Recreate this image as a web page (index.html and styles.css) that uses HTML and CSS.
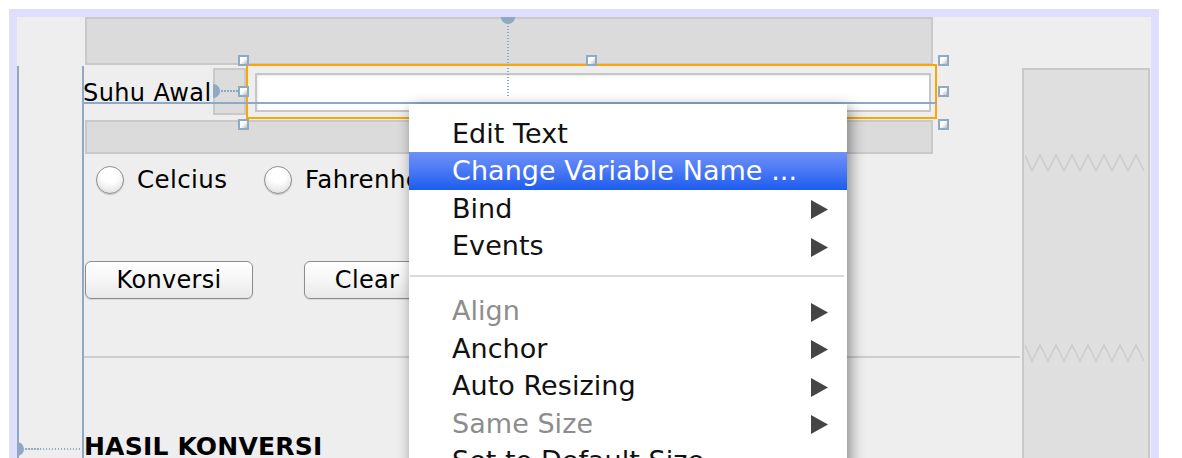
FILE: index.html
```html
<!DOCTYPE html>
<html lang="id">
<head>
<meta charset="utf-8">
<title>Form Designer</title>
<link rel="stylesheet" href="styles.css">
</head>
<body>
<div class="designer">
  <div class="canvas">
    <div class="gutter"></div>
    <div class="form">
      <div class="gap-box top-gap"></div>
      <div class="field-row">
        <div class="field-label">Suhu Awal</div>
        <div class="gap-box small-gap"></div>
        <div class="field-sel">
          <div class="textfield"></div>
          <span class="handle h-l h-t"></span>
          <span class="handle h-c h-t"></span>
          <span class="handle h-r h-t"></span>
          <span class="handle h-l h-m"></span>
          <span class="handle h-r h-m"></span>
          <span class="handle h-l h-b"></span>
          <span class="handle h-r h-b"></span>
        </div>
      </div>
      <div class="gap-box mid-gap"></div>
      <div class="radios">
        <div class="radio radio-first"><span class="radio-dot"></span><span>Celcius</span></div>
        <div class="radio"><span class="radio-dot"></span><span>Fahrenheit</span></div>
      </div>
      <div class="buttons">
        <div class="btn btn-konversi">Konversi</div>
        <div class="btn btn-clear">Clear</div>
      </div>
      <div class="divider"></div>
      <div class="heading">HASIL KONVERSI</div>
    </div>
    <div class="side-panel">
      <svg class="zigzag zig-1" width="124" height="20" viewBox="0 0 124 20"><polyline points="0,2 7,18 15,2 23,18 31,2 39,18 47,2 55,18 63,2 71,18 79,2 87,18 95,2 103,18 111,2 119,18" fill="none" stroke="#cdcdcd" stroke-width="1.6"/></svg>
      <svg class="zigzag zig-2" width="124" height="20" viewBox="0 0 124 20"><polyline points="0,2 7,18 15,2 23,18 31,2 39,18 47,2 55,18 63,2 71,18 79,2 87,18 95,2 103,18 111,2 119,18" fill="none" stroke="#cdcdcd" stroke-width="1.6"/></svg>
    </div>

    <span class="guide guide-v1"></span>
    <span class="guide guide-v2"></span>
    <span class="guide guide-h"></span>
    <span class="dots-v dots-top"></span>
    <span class="knob knob-top"></span>
    <span class="knob knob-right knob-label"></span>
    <span class="dots-h dots-label"></span>
    <span class="knob knob-right knob-bottom"></span>
    <span class="dots-h dots-bottom"></span>

    <div class="menu">
      <div class="mi">Edit Text</div>
      <div class="mi mi-active">Change Variable Name ...</div>
      <div class="mi">Bind<svg class="arrow" width="17" height="19" viewBox="0 0 17 19"><polygon points="0,0 17,9.5 0,19" fill="#454545"/></svg></div>
      <div class="mi">Events<svg class="arrow" width="17" height="19" viewBox="0 0 17 19"><polygon points="0,0 17,9.5 0,19" fill="#454545"/></svg></div>
      <div class="msep"></div>
      <div class="mi mi-disabled">Align<svg class="arrow" width="17" height="19" viewBox="0 0 17 19"><polygon points="0,0 17,9.5 0,19" fill="#454545"/></svg></div>
      <div class="mi">Anchor<svg class="arrow" width="17" height="19" viewBox="0 0 17 19"><polygon points="0,0 17,9.5 0,19" fill="#454545"/></svg></div>
      <div class="mi">Auto Resizing<svg class="arrow" width="17" height="19" viewBox="0 0 17 19"><polygon points="0,0 17,9.5 0,19" fill="#454545"/></svg></div>
      <div class="mi mi-disabled">Same Size<svg class="arrow" width="17" height="19" viewBox="0 0 17 19"><polygon points="0,0 17,9.5 0,19" fill="#454545"/></svg></div>
      <div class="mi">Set to Default Size</div>
    </div>
  </div>
</div>
</body>
</html>
```

FILE: styles.css
```css
html, body {
  margin: 0;
  padding: 0;
  height: 458px;
  overflow: hidden;
  background: #ffffff;
}

.designer {
  margin: 9px 0 0 9px;
  width: 1150px;
  box-sizing: border-box;
  border: 8px solid #dfdffd;
  border-bottom: none;
}

.canvas {
  position: relative;
  display: flex;
  height: 460px;
  background: #eeeeee;
  font-family: "DejaVu Sans", "Noto Sans", sans-serif;
  color: #000;
}

.gutter {
  width: 65px;
  flex-shrink: 0;
}

.form {
  width: 940px;
  flex-shrink: 0;
}

.gap-box {
  box-sizing: border-box;
  background: #dbdbdb;
  border: 2px solid #c9c9c9;
}

.top-gap {
  margin-left: 3px;
  width: 848px;
  height: 48px;
}

.field-row {
  display: flex;
  height: 55px;
}

.field-label {
  width: 130px;
  margin-left: 1px;
  margin-top: 14px;
  font-size: 24px;
  line-height: 28px;
  letter-spacing: 0.4px;
  white-space: nowrap;
}

.small-gap {
  width: 33px;
  height: 47px;
  margin-top: 3px;
  background: #dcdcdc;
}

.field-sel {
  position: relative;
  width: 691px;
  height: 55px;
  margin-top: -1px;
  box-sizing: border-box;
  border: 2px solid #ffa500;
  padding: 7px;
}

.textfield {
  width: 676px;
  height: 39px;
  box-sizing: border-box;
  border: 2px solid #c6c6c6;
  background: #ffffff;
  box-shadow: inset 1px 1px 2px rgba(0, 0, 0, 0.08);
}

.handle {
  position: absolute;
  width: 11px;
  height: 11px;
  box-sizing: border-box;
  border: 2px solid #8faac4;
  background: linear-gradient(135deg, #ffffff 45%, #b9b9b9 100%);
}
.h-l { left: -10px; }
.h-c { left: 338px; }
.h-r { left: 690px; }
.h-t { top: -11px; }
.h-m { top: 20px; }
.h-b { top: 53px; }

.mid-gap {
  margin-left: 3px;
  width: 848px;
  height: 34px;
}

.radios {
  display: flex;
  margin-left: 14px;
  padding-top: 12px;
}

.radio {
  display: flex;
  align-items: center;
  gap: 13px;
  font-size: 24.5px;
  line-height: 28px;
  letter-spacing: 0.4px;
  white-space: nowrap;
}

.radio-first {
  width: 168px;
}

.radio-dot {
  width: 28px;
  height: 28px;
  box-sizing: border-box;
  border-radius: 50%;
  border: 1px solid #8e8e8e;
  background: radial-gradient(circle at 50% 30%, #ffffff 35%, #f0f0f0 60%, #d6d6d6 100%);
  box-shadow: 0 1px 1px rgba(0, 0, 0, 0.18);
}

.buttons {
  display: flex;
  gap: 51px;
  margin-top: 67px;
  margin-left: 3px;
}

.btn {
  height: 38px;
  box-sizing: border-box;
  border: 1px solid #8d8d8d;
  border-radius: 6px;
  background: linear-gradient(#ffffff, #f6f6f6 50%, #e8e8e8);
  box-shadow: 0 1px 1px rgba(0, 0, 0, 0.1);
  font-size: 24px;
  line-height: 36px;
  letter-spacing: 0.3px;
  text-align: center;
  white-space: nowrap;
}

.btn-konversi { width: 168px; }
.btn-clear { width: 126px; }

.divider {
  margin-top: 57px;
  width: 938px;
  height: 2px;
  background: #cdcdcd;
}

.heading {
  margin-top: 74px;
  margin-left: 2px;
  font-size: 25px;
  font-weight: bold;
  line-height: 30px;
  letter-spacing: 0.2px;
  white-space: nowrap;
}

.side-panel {
  width: 128px;
  height: 420px;
  margin-top: 51px;
  box-sizing: border-box;
  border: 2px solid #c8c8c8;
  background: #dfdfdf;
  flex-shrink: 0;
}

.zigzag {
  display: block;
  margin-left: 1px;
}
.zig-1 { margin-top: 83px; }
.zig-2 { margin-top: 170px; }

/* designer guides (overlay) */
.guide {
  position: absolute;
  background: #8ea9c3;
}
.guide-v1 { left: 0; top: 49px; width: 1.5px; height: 420px; }
.guide-v2 { left: 65px; top: 49px; width: 2px; height: 420px; }
.guide-h { left: 65px; top: 85px; width: 855px; height: 2px; }

.dots-v {
  position: absolute;
  width: 2px;
  background: repeating-linear-gradient(180deg, #8ea9c3 0 1.5px, transparent 1.5px 3px);
}
.dots-h {
  position: absolute;
  height: 2px;
  background: repeating-linear-gradient(90deg, #8ea9c3 0 1.5px, transparent 1.5px 3px);
}
.dots-top { left: 490px; top: 0; height: 81px; }
.dots-label { left: 204px; top: 73px; width: 17px; }
.dots-bottom { left: 8px; top: 431px; width: 55px; }

.knob {
  position: absolute;
  background: #8ea9c3;
}
.knob-top { left: 484px; top: 0; width: 14px; height: 7px; border-radius: 0 0 7px 7px; }
.knob-right { width: 7px; height: 14px; border-radius: 0 7px 7px 0; }
.knob-label { left: 196px; top: 67px; }
.knob-bottom { left: 0; top: 425px; }

/* context menu (overlay) */
.menu {
  position: absolute;
  left: 392px;
  top: 87px;
  width: 438px;
  padding-top: 10.5px;
  background: #ffffff;
  box-shadow: 3px 4px 14px rgba(0, 0, 0, 0.45);
}

.mi {
  display: flex;
  align-items: center;
  justify-content: space-between;
  height: 37.5px;
  line-height: 37.5px;
  padding: 0 19px 0 43px;
  font-size: 27px;
  letter-spacing: 0.05px;
  color: #111;
  white-space: nowrap;
}

.mi-active {
  color: #ffffff;
  background: linear-gradient(#6e91f8, #4a78f4 50%, #1c5cf0);
}

.mi-disabled {
  color: #8d8d8d;
}

.arrow {
  display: block;
  margin-top: 3px;
}

.msep {
  height: 2px;
  margin: 10.5px 3px 15px 1px;
  background: #dadada;
}
```
